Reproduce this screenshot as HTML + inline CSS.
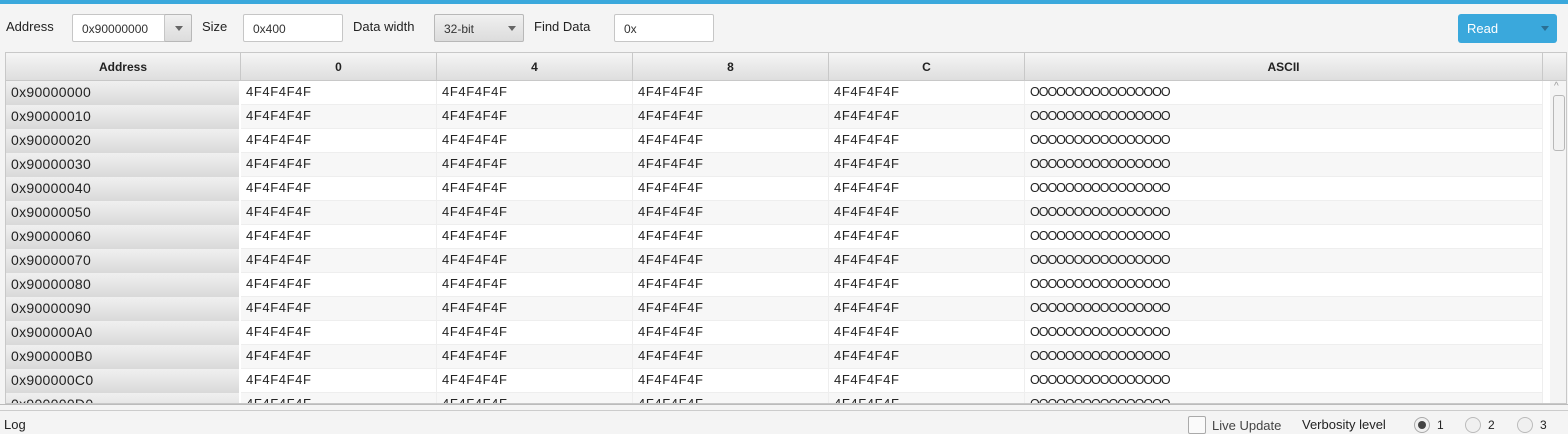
<!DOCTYPE html>
<html><head><style>
*{margin:0;padding:0;box-sizing:border-box}
body{width:1568px;height:430px;overflow:hidden;background:#f4f4f4;font-family:"Liberation Sans",sans-serif;font-size:13px;color:#222;position:relative}
.top{position:absolute;left:0;top:0;width:1568px;height:4px;background:#3aa8dc}
.lbl{position:absolute;top:19px;font-size:13px;color:#222}
.box{position:absolute;top:14px;height:28px;background:#fff;border:1px solid #c6c6c6;border-radius:2px;font-size:12px;padding:7px 9px;color:#333}
.dd{position:absolute;top:14px;height:28px;border:1px solid #b8b8b8;border-radius:2px;background:linear-gradient(#f0f0f0,#dcdcdc)}
.arr{position:absolute;width:0;height:0;border-left:4px solid transparent;border-right:4px solid transparent;border-top:5px solid #666}
.tbl{position:absolute;left:5px;top:52px;width:1562px;height:352px;border:1px solid #c8c8c8;background:#fff;overflow:hidden}
.hdr{position:absolute;top:0;height:28px;background:linear-gradient(#f5f5f5,#dedede);border-right:1px solid #c8c8c8;border-bottom:1px solid #c8c8c8;font-weight:bold;font-size:12px;text-align:center;line-height:28px}
.row{position:absolute;left:0;width:1536px;height:24px}
.c{position:absolute;top:0;height:24px;line-height:22px;padding-left:5px;border-right:1px solid #eee;font-size:13px;letter-spacing:0.6px}
.a{background:linear-gradient(#f0f0f0,#d9d9d9);border-right:2px solid #fff;padding-left:5px;font-size:14px;letter-spacing:0.3px}
.s{font-size:12.5px;letter-spacing:-1px;line-height:23px}
</style></head><body>
<div class="top"></div>
<div class="lbl" style="left:6px">Address</div>
<div class="box" style="left:72px;width:120px">0x90000000</div>
<div class="dd" style="left:164px;width:28px;border-left:1px solid #c6c6c6"><div class="arr" style="left:10px;top:11px"></div></div>
<div class="lbl" style="left:202px">Size</div>
<div class="box" style="left:243px;width:100px">0x400</div>
<div class="lbl" style="left:353px">Data width</div>
<div class="dd" style="left:434px;width:90px;font-size:12px;padding:7px 9px;color:#333">32-bit<div class="arr" style="left:73px;top:11px"></div></div>
<div class="lbl" style="left:534px">Find Data</div>
<div class="box" style="left:614px;width:100px">0x</div>
<div style="position:absolute;left:1458px;top:14px;width:99px;height:29px;background:#3aa8dc;border-radius:3px;color:#fff;font-size:13px;padding:7px 9px">Read<div class="arr" style="left:83px;top:12px;border-top-color:#2a6f94"></div></div>
<div class="tbl">
<div class="hdr" style="left:0;width:235px">Address</div>
<div class="hdr" style="left:235px;width:196px">0</div>
<div class="hdr" style="left:431px;width:196px">4</div>
<div class="hdr" style="left:627px;width:196px">8</div>
<div class="hdr" style="left:823px;width:196px">C</div>
<div class="hdr" style="left:1019px;width:518px">ASCII</div>
<div class="hdr" style="left:1537px;width:25px;border-right:none"></div>
<div id="rows"></div>
<div style="position:absolute;left:1544px;top:28px;width:16px;height:324px;background:#f4f4f4"></div>
<div style="position:absolute;left:1547px;top:42px;width:12px;height:56px;border:1px solid #b8b8b8;border-radius:3px;background:#f2f2f2"></div>
<div style="position:absolute;left:1548px;top:28px;font-size:10px;color:#999">^</div>
</div>
<div style="position:absolute;left:0;top:404px;width:1568px;height:1px;background:#bbb"></div>
<div style="position:absolute;left:0;top:410px;width:1568px;height:1px;background:#ccc"></div>
<div style="position:absolute;left:4px;top:417px;font-size:13px">Log</div>
<div style="position:absolute;left:1188px;top:416px;width:18px;height:18px;border:1px solid #aaa;background:#fafafa;border-radius:2px"></div>
<div style="position:absolute;left:1212px;top:418px;font-size:13px;color:#444">Live Update</div>
<div style="position:absolute;left:1302px;top:417px;font-size:13px">Verbosity level</div>
<div style="position:absolute;left:1414px;top:417px;width:16px;height:16px;border:1px solid #aaa;border-radius:50%;background:#f0f0f0"><div style="margin:3px;width:8px;height:8px;border-radius:50%;background:#444"></div></div>
<div style="position:absolute;left:1437px;top:418px;font-size:12px">1</div>
<div style="position:absolute;left:1465px;top:417px;width:16px;height:16px;border:1px solid #bbb;border-radius:50%;background:#f0f0f0"></div>
<div style="position:absolute;left:1488px;top:418px;font-size:12px">2</div>
<div style="position:absolute;left:1517px;top:417px;width:16px;height:16px;border:1px solid #bbb;border-radius:50%;background:#f0f0f0"></div>
<div style="position:absolute;left:1540px;top:418px;font-size:12px">3</div>
<script>
var a=["00","10","20","30","40","50","60","70","80","90","A0","B0","C0","D0"],h="";
a.forEach(function(x,i){var bg=i%2?"#f7f7f7":"#fff";var t=28+i*24;
h+='<div class="row" style="top:'+t+'px;background:'+bg+';border-bottom:1px solid #eee">'+
'<div class="c a" style="left:0;width:235px">0x900000'+x+'</div>';
[235,431,627,823].forEach(function(l){h+='<div class="c" style="left:'+l+'px;width:196px">4F4F4F4F</div>'});
h+='<div class="c s" style="left:1019px;width:518px">OOOOOOOOOOOOOOOO</div></div>';});
document.getElementById("rows").innerHTML=h;
</script>
</body></html>
